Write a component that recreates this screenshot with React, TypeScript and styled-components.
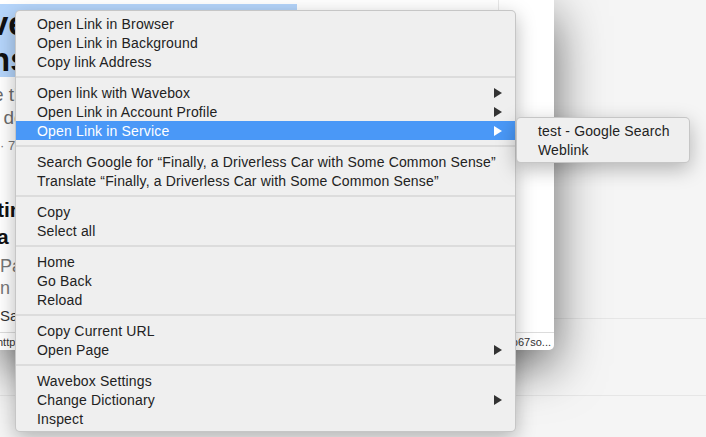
import React from "react";
import styled, { createGlobalStyle } from "styled-components";

const GlobalStyle = createGlobalStyle`
  html, body { margin: 0; padding: 0; }
  body {
    width: 706px;
    height: 437px;
    overflow: hidden;
    background: #f4f4f4;
    font-family: "Liberation Sans", Arial, sans-serif;
  }
`;

const Desktop = styled.div`
  position: relative;
  width: 706px;
  height: 437px;
  overflow: hidden;
  background: #f5f5f5;
`;

const BackRow = styled.div<{ $h: number }>`
  height: ${(p) => p.$h}px;
  border-bottom: 1px solid #e6e6e6;
`;

const Window = styled.div`
  position: absolute;
  left: 0;
  top: 0;
  width: 554px;
  height: 350px;
  display: flex;
  flex-direction: column;
  background: #fff;
  border-bottom-right-radius: 5px;
  box-shadow: 0 16px 50px rgba(0, 0, 0, 0.6);
  overflow: hidden;
`;

const Page = styled.div`
  flex: 1;
  display: flex;
  min-height: 0;
`;

const Article = styled.div`
  width: 498px;
  border-right: 1px solid #e8e8e8;
  display: flex;
  flex-direction: column;
  white-space: nowrap;
  overflow: hidden;
`;

const Title = styled.h1`
  margin: 4px 0 0;
  padding-top: 2px;
  box-sizing: border-box;
  width: 297px;
  height: 73px;
  background: #b5d5fb;
  font-size: 33px;
  line-height: 36px;
  font-weight: 700;
  color: #111;
  overflow: hidden;
  span {
    display: block;
    margin-left: -10px;
  }
`;

const Lead = styled.p`
  margin: 6px 0 0 -7px;
  font-size: 19px;
  line-height: 23px;
  color: #6b6b6b;
`;

const Meta = styled.div`
  margin-top: 9px;
  font-size: 13px;
  line-height: 16px;
  color: #777;
`;

const Heading = styled.h2`
  margin: 42px 0 0 -3px;
  font-size: 21px;
  line-height: 27px;
  font-weight: 700;
  color: #111;
`;

const Body = styled.p`
  margin: 5px 0 0;
  font-size: 18px;
  line-height: 22px;
  color: #777;
`;

const Byline = styled.div`
  margin-top: 8px;
  font-size: 15px;
  line-height: 18px;
  color: #333;
`;

const Aside = styled.div`
  flex: 1;
  display: flex;
  align-items: flex-end;
  padding: 0 0 4px 7px;
  color: #777;
`;

const StatusBar = styled.div`
  height: 17px;
  display: flex;
  align-items: center;
  border-top: 1px solid #dcdcdc;
  font-size: 11px;
  color: #333;
  white-space: nowrap;
  padding-right: 3px;
`;

const UrlHead = styled.span`
  flex: 1;
  overflow: hidden;
  text-indent: -3px;
`;

const Menu = styled.div<{ $left: number; $top: number; $width: number }>`
  position: absolute;
  left: ${(p) => p.$left}px;
  top: ${(p) => p.$top}px;
  width: ${(p) => p.$width}px;
  box-sizing: border-box;
  padding: 3px 0;
  background: #efefef;
  border: 1px solid rgba(0, 0, 0, 0.17);
  border-radius: 5px;
  box-shadow: 0 6px 20px rgba(0, 0, 0, 0.28);
  font-size: 14px;
  letter-spacing: 0.16px;
  color: #222;
`;

const Item = styled.div<{ $active?: boolean }>`
  height: 19px;
  display: flex;
  align-items: center;
  justify-content: space-between;
  padding: 0 13px 0 21px;
  white-space: nowrap;
  background: ${(p) => (p.$active ? "#4a98f7" : "transparent")};
  color: ${(p) => (p.$active ? "#fff" : "#222")};
`;

const Separator = styled.div`
  height: 12px;
  display: flex;
  align-items: center;
  &::after {
    content: "";
    flex: 1;
    height: 2px;
    background: #dcdcdc;
  }
`;

const Arrow = ({ color }: { color: string }) => (
  <svg width="8" height="10" viewBox="0 0 8 10">
    <polygon points="0,0 8,5 0,10" fill={color} />
  </svg>
);

type Entry = { label: string; sub?: boolean; active?: boolean };

const groups: Entry[][] = [
  [
    { label: "Open Link in Browser" },
    { label: "Open Link in Background" },
    { label: "Copy link Address" },
  ],
  [
    { label: "Open link with Wavebox", sub: true },
    { label: "Open Link in Account Profile", sub: true },
    { label: "Open Link in Service", sub: true, active: true },
  ],
  [
    { label: "Search Google for \u201cFinally, a Driverless Car with Some Common Sense\u201d" },
    { label: "Translate \u201cFinally, a Driverless Car with Some Common Sense\u201d" },
  ],
  [{ label: "Copy" }, { label: "Select all" }],
  [{ label: "Home" }, { label: "Go Back" }, { label: "Reload" }],
  [{ label: "Copy Current URL" }, { label: "Open Page", sub: true }],
  [
    { label: "Wavebox Settings" },
    { label: "Change Dictionary", sub: true },
    { label: "Inspect" },
  ],
];

export default function App() {
  return (
    <>
      <GlobalStyle />
      <Desktop>
        <BackRow $h={318} />
        <BackRow $h={76} />

        <Window>
          <Page>
            <Article>
              <Title>
                <span>verless Car with Some</span>
                <span>nse</span>
              </Title>
              <Lead>
                e the robot cars that will share
                <br />
                t do with human drivers
              </Lead>
              <Meta>· 7 min read</Meta>
              <Heading>
                ting the rules of the road
                <br />
                a lot harder than it looks
              </Heading>
              <Body>
                Papers from the research lab
                <br />
                n city streets, not test tracks
              </Body>
              <Byline>Sam Hartley</Byline>
            </Article>
            <Aside>
              <svg width="8" height="11" viewBox="0 0 8 11">
                <path d="M1.5 1 L6 5.5 L1.5 10" fill="none" stroke="#666" strokeWidth="1.6" />
              </svg>
            </Aside>
          </Page>
          <StatusBar>
            <UrlHead>
              https://www.wired.com/story/finally-a-driverless-car-with-some-common-sense/?mbid=social_twitter_onsiteshare&utm_campaign=wired
            </UrlHead>
            <span>p67so...</span>
          </StatusBar>
        </Window>

        <Menu $left={15} $top={10} $width={501}>
          {groups.map((g, gi) => (
            <React.Fragment key={gi}>
              {gi > 0 && <Separator />}
              {g.map((e) => (
                <Item key={e.label} $active={e.active}>
                  <span>{e.label}</span>
                  {e.sub && <Arrow color={e.active ? "#fff" : "#333"} />}
                </Item>
              ))}
            </React.Fragment>
          ))}
        </Menu>

        <Menu $left={516} $top={117} $width={174}>
          <Item>test - Google Search</Item>
          <Item>Weblink</Item>
        </Menu>
      </Desktop>
    </>
  );
}
